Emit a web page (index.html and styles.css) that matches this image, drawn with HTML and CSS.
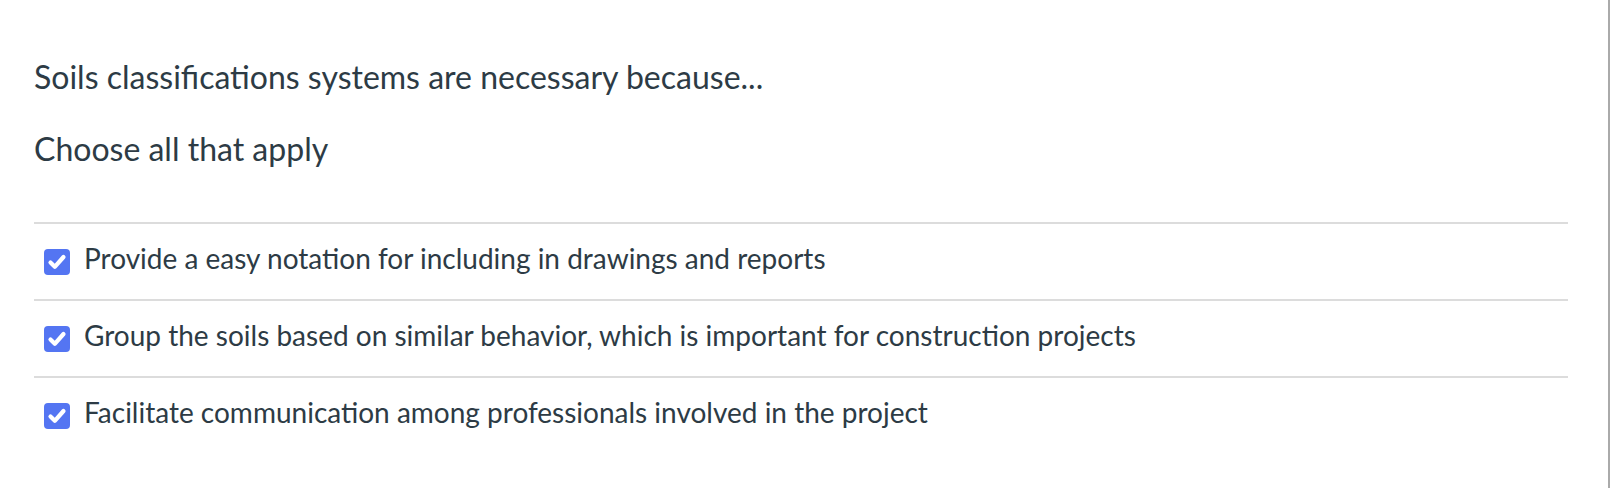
FILE: index.html
```html
<!DOCTYPE html>
<html>
<head>
<meta charset="utf-8">
<link rel="stylesheet" href="styles.css">
</head>
<body>
<div class="page">
  <div class="question">
    <p class="q-text">Soils classifications systems are necessary because...</p>
    <p class="q-text">Choose all that apply</p>
  </div>
  <div class="answers">
    <label class="answer">
      <span class="check"><svg viewBox="0 0 26 26" width="26" height="26"><rect x="0" y="0" width="26" height="26" rx="4" fill="#5475f2"/><path d="M6.5 13.5 L10.8 17.8 L19.5 8" fill="none" stroke="#fff" stroke-width="4.2" stroke-linecap="round" stroke-linejoin="round"/></svg></span>
      <span class="a-text">Provide a easy notation for including in drawings and reports</span>
    </label>
    <label class="answer">
      <span class="check"><svg viewBox="0 0 26 26" width="26" height="26"><rect x="0" y="0" width="26" height="26" rx="4" fill="#5475f2"/><path d="M6.5 13.5 L10.8 17.8 L19.5 8" fill="none" stroke="#fff" stroke-width="4.2" stroke-linecap="round" stroke-linejoin="round"/></svg></span>
      <span class="a-text">Group the soils based on similar behavior, which is important for construction projects</span>
    </label>
    <label class="answer">
      <span class="check"><svg viewBox="0 0 26 26" width="26" height="26"><rect x="0" y="0" width="26" height="26" rx="4" fill="#5475f2"/><path d="M6.5 13.5 L10.8 17.8 L19.5 8" fill="none" stroke="#fff" stroke-width="4.2" stroke-linecap="round" stroke-linejoin="round"/></svg></span>
      <span class="a-text">Facilitate communication among professionals involved in the project</span>
    </label>
  </div>
</div>
</body>
</html>
```

FILE: styles.css
```css
html, body {
  margin: 0;
  padding: 0;
  background: #fff;
}
body {
  font-family: Lato, "Liberation Sans", sans-serif;
  color: #2d3b45;
}
.page {
  height: 488px;
  box-sizing: border-box;
  border-right: 2px solid #aaaaaa;
  padding: 58px 40px 0 34px;
}
.question {
  padding-bottom: 54px;
}
.q-text {
  margin: 0 0 34px 0;
  font-size: 32px;
  line-height: 38px;
}
.q-text:last-child {
  margin-bottom: 0;
}
.answers {
  border-top: 2px solid #dcdcdc;
}
.answer {
  display: flex;
  align-items: center;
  height: 75px;
  border-bottom: 2px solid #dcdcdc;
  padding-left: 10px;
  gap: 14px;
}
.answer:last-child {
  border-bottom: none;
}
.check {
  display: flex;
  width: 26px;
  height: 26px;
  margin-top: 1px;
}
.a-text {
  font-size: 28px;
  line-height: 34px;
  padding-bottom: 7px;
}
```
